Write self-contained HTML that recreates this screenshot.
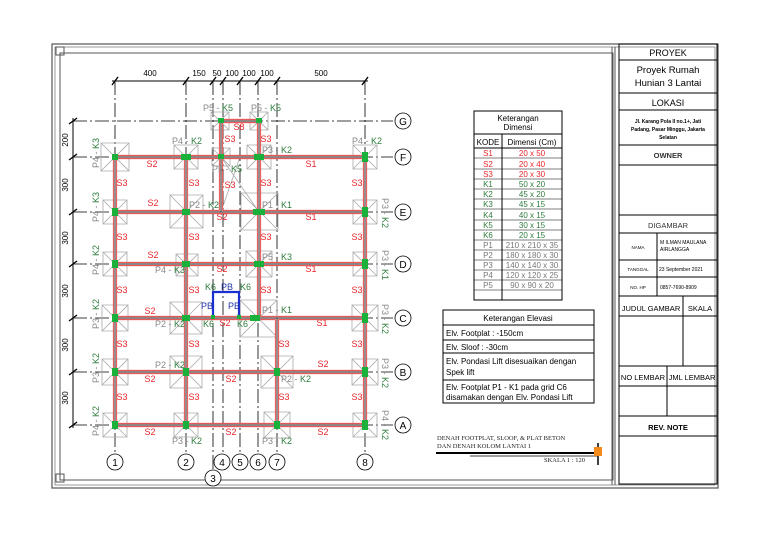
<!DOCTYPE html>
<html><head><meta charset="utf-8"><style>
html,body{margin:0;padding:0;background:#fff;}
svg{display:block;font-family:"Liberation Sans",sans-serif;}
.r{fill:#e8262b;font-size:9px}
.g{fill:#2f7d3e;font-size:9px}
.y{fill:#888;font-size:9px}
.b{fill:#2233aa;font-size:9px}
.k{fill:#000}
</style></head><body>
<svg width="768" height="543" viewBox="0 0 768 543" xmlns="http://www.w3.org/2000/svg">
<rect width="768" height="543" fill="#fff"/>
<g fill="none" stroke="#555">
<rect x="52" y="44" width="666" height="444" stroke-width="1.2"/>
<rect x="55" y="47" width="660" height="438" stroke-width="0.6"/>
<rect x="60" y="53" width="553" height="427" stroke-width="1"/>
<line x1="612" y1="47" x2="612" y2="485"/><line x1="615" y1="47" x2="615" y2="485"/>
<rect x="56" y="47" width="8" height="8"/><rect x="56" y="474" width="8" height="8"/>
</g>
<g stroke="#000" stroke-width="1" fill="none">
<rect x="619" y="44" width="98" height="440"/>
<line x1="619" y1="60" x2="717" y2="60"/><line x1="619" y1="93" x2="717" y2="93"/>
<line x1="619" y1="110" x2="717" y2="110"/><line x1="619" y1="145" x2="717" y2="145"/>
<line x1="619" y1="165" x2="717" y2="165"/><line x1="619" y1="215" x2="717" y2="215"/>
<line x1="619" y1="233" x2="717" y2="233"/><line x1="619" y1="260" x2="717" y2="260"/>
<line x1="619" y1="277" x2="717" y2="277"/><line x1="619" y1="296" x2="717" y2="296"/>
<line x1="619" y1="316" x2="717" y2="316"/><line x1="619" y1="366" x2="717" y2="366"/>
<line x1="619" y1="386" x2="717" y2="386"/><line x1="619" y1="416" x2="717" y2="416"/>
<line x1="619" y1="436" x2="717" y2="436"/>
<line x1="657" y1="233" x2="657" y2="296"/><line x1="683" y1="296" x2="683" y2="366"/>
<line x1="667" y1="366" x2="667" y2="416"/>
</g>
<g text-anchor="middle" class="k">
<text x="668" y="56" font-size="9">PROYEK</text>
<text x="668" y="73" font-size="9.5">Proyek Rumah</text>
<text x="668" y="86" font-size="9.5">Hunian 3 Lantai</text>
<text x="668" y="106" font-size="9">LOKASI</text>
<text x="668" y="123" font-size="5" font-weight="bold">Jl. Karang Pola II no.1+, Jati</text>
<text x="668" y="131" font-size="5" font-weight="bold">Padang, Pasar Minggu, Jakarta</text>
<text x="668" y="139" font-size="5" font-weight="bold">Selatan</text>
<text x="668" y="158" font-size="7.5" font-weight="bold" fill="#333">OWNER</text>
<text x="668" y="228" font-size="7.5" fill="#333">DIGAMBAR</text>
<text x="638" y="249" font-size="4.5">NAMA</text>
<text x="638" y="271" font-size="4.5">TANGGAL</text>
<text x="638" y="289" font-size="4.5">NO. HP</text>
<text x="651" y="311" font-size="7.5">JUDUL GAMBAR</text>
<text x="700" y="311" font-size="7.5">SKALA</text>
<text x="643" y="380" font-size="7.5">NO LEMBAR</text>
<text x="692" y="380" font-size="7.5">JML LEMBAR</text>
<text x="668" y="430" font-size="7.5" font-weight="bold">REV. NOTE</text>
</g>
<g class="k" font-size="5">
<text x="660" y="244">M ILMAN MAULANA</text><text x="660" y="251">AIRLANGGA</text>
<text x="659" y="271">23 September 2021</text>
<text x="660" y="289">0857-7690-8909</text>
</g>
<g stroke="#000" stroke-width="0.8" stroke-dasharray="14,3,2,3" fill="none">
<line x1="115" y1="81" x2="115" y2="454"/><line x1="186" y1="81" x2="186" y2="454"/>
<line x1="213" y1="81" x2="213" y2="470"/><line x1="223" y1="81" x2="223" y2="454"/>
<line x1="240" y1="81" x2="240" y2="454"/><line x1="258" y1="81" x2="258" y2="454"/>
<line x1="277" y1="81" x2="277" y2="454"/><line x1="365" y1="81" x2="365" y2="454"/>
<line x1="73" y1="121" x2="393" y2="121"/><line x1="73" y1="157" x2="393" y2="157"/>
<line x1="73" y1="212" x2="393" y2="212"/><line x1="73" y1="264" x2="393" y2="264"/>
<line x1="73" y1="318" x2="393" y2="318"/><line x1="73" y1="372" x2="393" y2="372"/>
<line x1="73" y1="425" x2="393" y2="425"/>
</g>
<g stroke="#000" stroke-width="1">
<line x1="112" y1="81" x2="368" y2="81"/><line x1="73" y1="118" x2="73" y2="428"/>
<g stroke-width="1.4">
<line x1="112" y1="85" x2="118" y2="77"/><line x1="183" y1="85" x2="189" y2="77"/><line x1="210" y1="85" x2="216" y2="77"/><line x1="220" y1="85" x2="226" y2="77"/><line x1="237" y1="85" x2="243" y2="77"/><line x1="255" y1="85" x2="261" y2="77"/><line x1="274" y1="85" x2="280" y2="77"/><line x1="362" y1="85" x2="368" y2="77"/>
<line x1="69" y1="124" x2="77" y2="118"/><line x1="69" y1="160" x2="77" y2="154"/><line x1="69" y1="215" x2="77" y2="209"/><line x1="69" y1="267" x2="77" y2="261"/><line x1="69" y1="321" x2="77" y2="315"/><line x1="69" y1="375" x2="77" y2="369"/><line x1="69" y1="428" x2="77" y2="422"/>
</g></g>
<g class="k" font-size="8" text-anchor="middle">
<text x="150" y="76">400</text><text x="199" y="76">150</text><text x="217" y="76">50</text><text x="232" y="76">100</text><text x="249" y="76">100</text><text x="267" y="76">100</text><text x="321" y="76">500</text>
<text transform="translate(68,140) rotate(-90)">200</text><text transform="translate(68,185) rotate(-90)">300</text><text transform="translate(68,238) rotate(-90)">300</text><text transform="translate(68,291) rotate(-90)">300</text><text transform="translate(68,345) rotate(-90)">300</text><text transform="translate(68,398) rotate(-90)">300</text>
</g>
<g stroke="#aaa" stroke-width="0.8" fill="none">
<path d="M101,143h28v28h-28zM101,143l28,28M129,143l-28,28"/>
<path d="M174,145h24v24h-24zM174,145l24,24M198,145l-24,24"/>
<path d="M212,148h18v18h-18zM212,148l18,18M230,148l-18,18"/>
<path d="M211,112h18v18h-18zM211,112l18,18M229,112l-18,18"/>
<path d="M250,112h18v18h-18zM250,112l18,18M268,112l-18,18"/>
<path d="M247,145h24v24h-24zM247,145l24,24M271,145l-24,24"/>
<path d="M353,145h24v24h-24zM353,145l24,24M377,145l-24,24"/>
<path d="M103,200h24v24h-24zM103,200l24,24M127,200l-24,24"/>
<path d="M170,195h33v33h-33zM170,195l33,33M203,195l-33,33"/>
<path d="M241,193h37v37h-37zM241,193l37,37M278,193l-37,37"/>
<path d="M353,200h24v24h-24zM353,200l24,24M377,200l-24,24"/>
<path d="M103,252h24v24h-24zM103,252l24,24M127,252l-24,24"/>
<path d="M176,254h22v22h-22zM176,254l22,22M198,254l-22,22"/>
<path d="M246,251h26v26h-26zM246,251l26,26M272,251l-26,26"/>
<path d="M353,252h24v24h-24zM353,252l24,24M377,252l-24,24"/>
<path d="M102,305h26v26h-26zM102,305l26,26M128,305l-26,26"/>
<path d="M170,302h32v32h-32zM170,302l32,32M202,302l-32,32"/>
<path d="M240,300h37v37h-37zM240,300l37,37M277,300l-37,37"/>
<path d="M352,305h26v26h-26zM352,305l26,26M378,305l-26,26"/>
<path d="M102,359h26v26h-26zM102,359l26,26M128,359l-26,26"/>
<path d="M170,356h32v32h-32zM170,356l32,32M202,356l-32,32"/>
<path d="M261,356h32v32h-32zM261,356l32,32M293,356l-32,32"/>
<path d="M352,359h26v26h-26zM352,359l26,26M378,359l-26,26"/>
<path d="M103,413h24v24h-24zM103,413l24,24M127,413l-24,24"/>
<path d="M174,413h24v24h-24zM174,413l24,24M198,413l-24,24"/>
<path d="M264,412h26v26h-26zM264,412l26,26M290,412l-26,26"/>
<path d="M353,413h24v24h-24zM353,413l24,24M377,413l-24,24"/>
<path d="M221,157L259,212M221,212L240,157"/>
</g>
<g fill="none" stroke-linecap="square">
<path d="M115,157H365M115,212H365M115,264H365M115,318H365M115,372H365M115,425H365M221,121H259M115,157V425M186,157V425M365,157V425M221,121V212M259,121V318M277,318V425" stroke="#e02a2a" stroke-width="4.2"/>
<path d="M115,157H365M115,212H365M115,264H365M115,318H365M115,372H365M115,425H365M221,121H259M115,157V425M186,157V425M365,157V425M221,121V212M259,121V318M277,318V425" stroke="#fde4e4" stroke-width="2.6"/>
<path d="M115,157H365M115,212H365M115,264H365M115,318H365M115,372H365M115,425H365M221,121H259M115,157V425M186,157V425M365,157V425M221,121V212M259,121V318M277,318V425" stroke="#222" stroke-width="0.9"/>
</g>
<path d="M213,318V292H239V318" fill="none" stroke="#1a2fd0" stroke-width="2.2"/>
<g fill="#19b13a">
<rect x="112" y="154" width="6" height="6"/><rect x="181" y="154" width="10" height="6"/><rect x="218" y="154" width="6" height="5"/><rect x="254" y="154" width="10" height="6"/><rect x="362" y="152" width="6" height="10"/>
<rect x="218" y="118" width="6" height="5"/><rect x="256" y="118" width="6" height="5"/>
<rect x="112" y="208" width="6" height="8"/><rect x="182" y="209" width="8" height="6"/><rect x="253" y="209" width="12" height="6"/><rect x="362" y="207" width="6" height="10"/>
<rect x="112" y="260" width="6" height="8"/><rect x="182" y="261" width="8" height="6"/><rect x="254" y="261" width="10" height="6"/><rect x="362" y="259" width="6" height="10"/>
<rect x="112" y="314" width="6" height="8"/><rect x="182" y="315" width="8" height="6"/><rect x="250" y="315" width="10" height="6"/><rect x="211" y="315" width="4" height="4"/><rect x="237" y="315" width="4" height="4"/><rect x="362" y="313" width="6" height="10"/>
<rect x="112" y="368" width="6" height="8"/><rect x="183" y="368" width="6" height="8"/><rect x="274" y="368" width="6" height="8"/><rect x="362" y="367" width="6" height="10"/>
<rect x="112" y="421" width="6" height="8"/><rect x="183" y="421" width="6" height="8"/><rect x="274" y="421" width="6" height="8"/><rect x="362" y="420" width="6" height="10"/>
</g>
<g fill="#fff" stroke="#000" stroke-width="0.8">
<circle cx="403" cy="121" r="8"/><circle cx="403" cy="157" r="8"/><circle cx="403" cy="212" r="8"/><circle cx="403" cy="264" r="8"/><circle cx="403" cy="318" r="8"/><circle cx="403" cy="372" r="8"/><circle cx="403" cy="425" r="8"/>
<circle cx="115" cy="462" r="8"/><circle cx="186" cy="462" r="8"/><circle cx="213" cy="478" r="8"/><circle cx="222" cy="462" r="8"/><circle cx="240" cy="462" r="8"/><circle cx="258" cy="462" r="8"/><circle cx="277" cy="462" r="8"/><circle cx="365" cy="462" r="8"/>
</g>
<g class="k" font-size="10" text-anchor="middle">
<text x="403" y="125">G</text><text x="403" y="161">F</text><text x="403" y="216">E</text><text x="403" y="268">D</text><text x="403" y="322">C</text><text x="403" y="376">B</text><text x="403" y="429">A</text>
<text x="115" y="466">1</text><text x="186" y="466">2</text><text x="213" y="482">3</text><text x="222" y="466">4</text><text x="240" y="466">5</text><text x="258" y="466">6</text><text x="277" y="466">7</text><text x="365" y="466">8</text>
</g>
<g class="r" text-anchor="middle">
<text x="152" y="167">S2</text><text x="311" y="167">S1</text>
<text x="153" y="206">S2</text><text x="222" y="220">S2</text><text x="311" y="220">S1</text>
<text x="153" y="258">S2</text><text x="222" y="272">S2</text><text x="311" y="272">S1</text>
<text x="150" y="314">S2</text><text x="225" y="326">S2</text><text x="322" y="326">S1</text>
<text x="150" y="382">S2</text><text x="231" y="382">S2</text><text x="323" y="367">S2</text>
<text x="150" y="435">S2</text><text x="231" y="435">S2</text><text x="323" y="435">S2</text>
<text x="239" y="130">S8</text>
<text x="122" y="186">S3</text><text x="194" y="186">S3</text><text x="230" y="188">S3</text><text x="266" y="186">S3</text><text x="357" y="186">S3</text>
<text x="122" y="240">S3</text><text x="194" y="240">S3</text><text x="266" y="240">S3</text><text x="357" y="240">S3</text>
<text x="122" y="293">S3</text><text x="194" y="293">S3</text><text x="266" y="293">S3</text><text x="357" y="293">S3</text>
<text x="122" y="347">S3</text><text x="194" y="347">S3</text><text x="284" y="347">S3</text><text x="357" y="347">S3</text>
<text x="122" y="400">S3</text><text x="194" y="400">S3</text><text x="284" y="400">S3</text><text x="357" y="400">S3</text>
<text x="230" y="142">S3</text><text x="266" y="142">S3</text>
</g>
<g font-size="8.5">
<text x="203" y="111" class="y">P5 - <tspan class="g">K5</tspan></text>
<text x="251" y="111" class="y">P5 - <tspan class="g">K5</tspan></text>
<text x="172" y="144" class="y">P4 - <tspan class="g">K2</tspan></text>
<text x="262" y="153" class="y">P3 - <tspan class="g">K2</tspan></text>
<text x="352" y="144" class="y">P4 - <tspan class="g">K2</tspan></text>
<text x="212" y="172" class="y">P5 - <tspan class="g">K5</tspan></text>
<text x="189" y="208" class="y">P2 - <tspan class="g">K2</tspan></text>
<text x="262" y="208" class="y">P1 - <tspan class="g">K1</tspan></text>
<text x="155" y="273" class="y">P4 - <tspan class="g">K3</tspan></text>
<text x="262" y="260" class="y">P5 - <tspan class="g">K3</tspan></text>
<text x="262" y="313" class="y">P1 - <tspan class="g">K1</tspan></text>
<text x="155" y="327" class="y">P2 - <tspan class="g">K2</tspan></text>
<text x="155" y="368" class="y">P2 - <tspan class="g">K2</tspan></text>
<text x="281" y="382" class="y">P2 - <tspan class="g">K2</tspan></text>
<text x="172" y="444" class="y">P3 - <tspan class="g">K2</tspan></text>
<text x="262" y="444" class="y">P3 - <tspan class="g">K2</tspan></text>
<text x="205" y="290" class="g">K6</text><text x="221" y="290" class="b">PB</text><text x="240" y="290" class="g">K6</text>
<text x="201" y="309" class="b">PB</text><text x="228" y="309" class="b">PB</text>
<text x="203" y="327" class="g">K6</text><text x="237" y="327" class="g">K6</text>
</g>
<g font-size="8.5">
<text transform="translate(99,168) rotate(-90)" class="y">P4 - <tspan class="g">K3</tspan></text>
<text transform="translate(99,222) rotate(-90)" class="y">P4 - <tspan class="g">K3</tspan></text>
<text transform="translate(99,275) rotate(-90)" class="y">P4 - <tspan class="g">K2</tspan></text>
<text transform="translate(99,329) rotate(-90)" class="y">P3 - <tspan class="g">K2</tspan></text>
<text transform="translate(99,383) rotate(-90)" class="y">P3 - <tspan class="g">K2</tspan></text>
<text transform="translate(99,436) rotate(-90)" class="y">P4 - <tspan class="g">K2</tspan></text>
<text transform="translate(382,198) rotate(90)" class="y">P3 - <tspan class="g">K2</tspan></text>
<text transform="translate(382,250) rotate(90)" class="y">P3 - <tspan class="g">K1</tspan></text>
<text transform="translate(382,304) rotate(90)" class="y">P3 - <tspan class="g">K2</tspan></text>
<text transform="translate(382,358) rotate(90)" class="y">P3 - <tspan class="g">K2</tspan></text>
<text transform="translate(382,410) rotate(90)" class="y">P4 - <tspan class="g">K2</tspan></text>
</g>
<g stroke="#000" stroke-width="1" fill="none">
<rect x="474" y="111" width="88" height="189"/>
<line x1="474" y1="134" x2="562" y2="134"/><line x1="474" y1="148" x2="562" y2="148"/>
<line x1="502" y1="134" x2="502" y2="300"/>
</g>
<g stroke="#000" stroke-width="0.6">
<line x1="474" y1="158" x2="562" y2="158"/><line x1="474" y1="169" x2="562" y2="169"/><line x1="474" y1="179" x2="562" y2="179"/><line x1="474" y1="189" x2="562" y2="189"/><line x1="474" y1="199" x2="562" y2="199"/><line x1="474" y1="209" x2="562" y2="209"/><line x1="474" y1="220" x2="562" y2="220"/><line x1="474" y1="230" x2="562" y2="230"/><line x1="474" y1="240" x2="562" y2="240"/><line x1="474" y1="250" x2="562" y2="250"/><line x1="474" y1="260" x2="562" y2="260"/><line x1="474" y1="270" x2="562" y2="270"/><line x1="474" y1="280" x2="562" y2="280"/><line x1="474" y1="290" x2="562" y2="290"/>
</g>
<g font-size="8" text-anchor="middle">
<text x="518" y="121" class="k">Keterangan</text><text x="518" y="130" class="k">Dimensi</text>
<text x="488" y="145" class="k">KODE</text><text x="532" y="145" class="k">Dimensi (Cm)</text>
<g fill="#e8262b"><text x="488" y="156">S1</text><text x="532" y="156">20 x 50</text><text x="488" y="167">S2</text><text x="532" y="167">20 x 40</text><text x="488" y="177">S3</text><text x="532" y="177">20 x 30</text></g>
<g fill="#2f7d3e"><text x="488" y="187">K1</text><text x="532" y="187">50 x 20</text><text x="488" y="197">K2</text><text x="532" y="197">45 x 20</text><text x="488" y="207">K3</text><text x="532" y="207">45 x 15</text><text x="488" y="218">K4</text><text x="532" y="218">40 x 15</text><text x="488" y="228">K5</text><text x="532" y="228">30 x 15</text><text x="488" y="238">K6</text><text x="532" y="238">20 x 15</text></g>
<g fill="#777"><text x="488" y="248">P1</text><text x="532" y="248">210 x 210 x 35</text><text x="488" y="258">P2</text><text x="532" y="258">180 x 180 x 30</text><text x="488" y="268">P3</text><text x="532" y="268">140 x 140 x 30</text><text x="488" y="278">P4</text><text x="532" y="278">120 x 120 x 25</text><text x="488" y="288">P5</text><text x="532" y="288">90 x 90 x 20</text></g>
</g>
<g stroke="#000" stroke-width="1" fill="none">
<rect x="443" y="310" width="151" height="93"/>
<line x1="443" y1="325" x2="594" y2="325"/><line x1="443" y1="340" x2="594" y2="340"/><line x1="443" y1="353" x2="594" y2="353"/><line x1="443" y1="380" x2="594" y2="380"/>
</g>
<g class="k" font-size="8">
<text x="518" y="321" text-anchor="middle">Keterangan Elevasi</text>
<text x="446" y="336">Elv. Footplat : -150cm</text>
<text x="446" y="350">Elv. Sloof : -30cm</text>
<text x="446" y="364">Elv. Pondasi Lift disesuaikan dengan</text><text x="446" y="375">Spek lift</text>
<text x="446" y="390">Elv. Footplat P1 - K1 pada grid C6</text><text x="446" y="400">disamakan dengan Elv. Pondasi Lift</text>
</g>
<g font-family="Liberation Serif,serif" font-size="6.5" fill="#222">
<text x="437" y="440">DENAH FOOTPLAT, SLOOF, &amp; PLAT BETON</text>
<text x="437" y="448">DAN DENAH KOLOM LANTAI 1</text>
<text x="544" y="462">SKALA 1 : 120</text>
</g>
<line x1="436" y1="453" x2="597" y2="453" stroke="#000" stroke-width="2"/>
<line x1="470" y1="456" x2="597" y2="456" stroke="#000" stroke-width="0.8"/>
<line x1="598" y1="443" x2="598" y2="465" stroke="#000" stroke-width="1.5"/>
<rect x="594" y="447" width="8" height="9" fill="#f28a1c"/>
</svg>
</body></html>
